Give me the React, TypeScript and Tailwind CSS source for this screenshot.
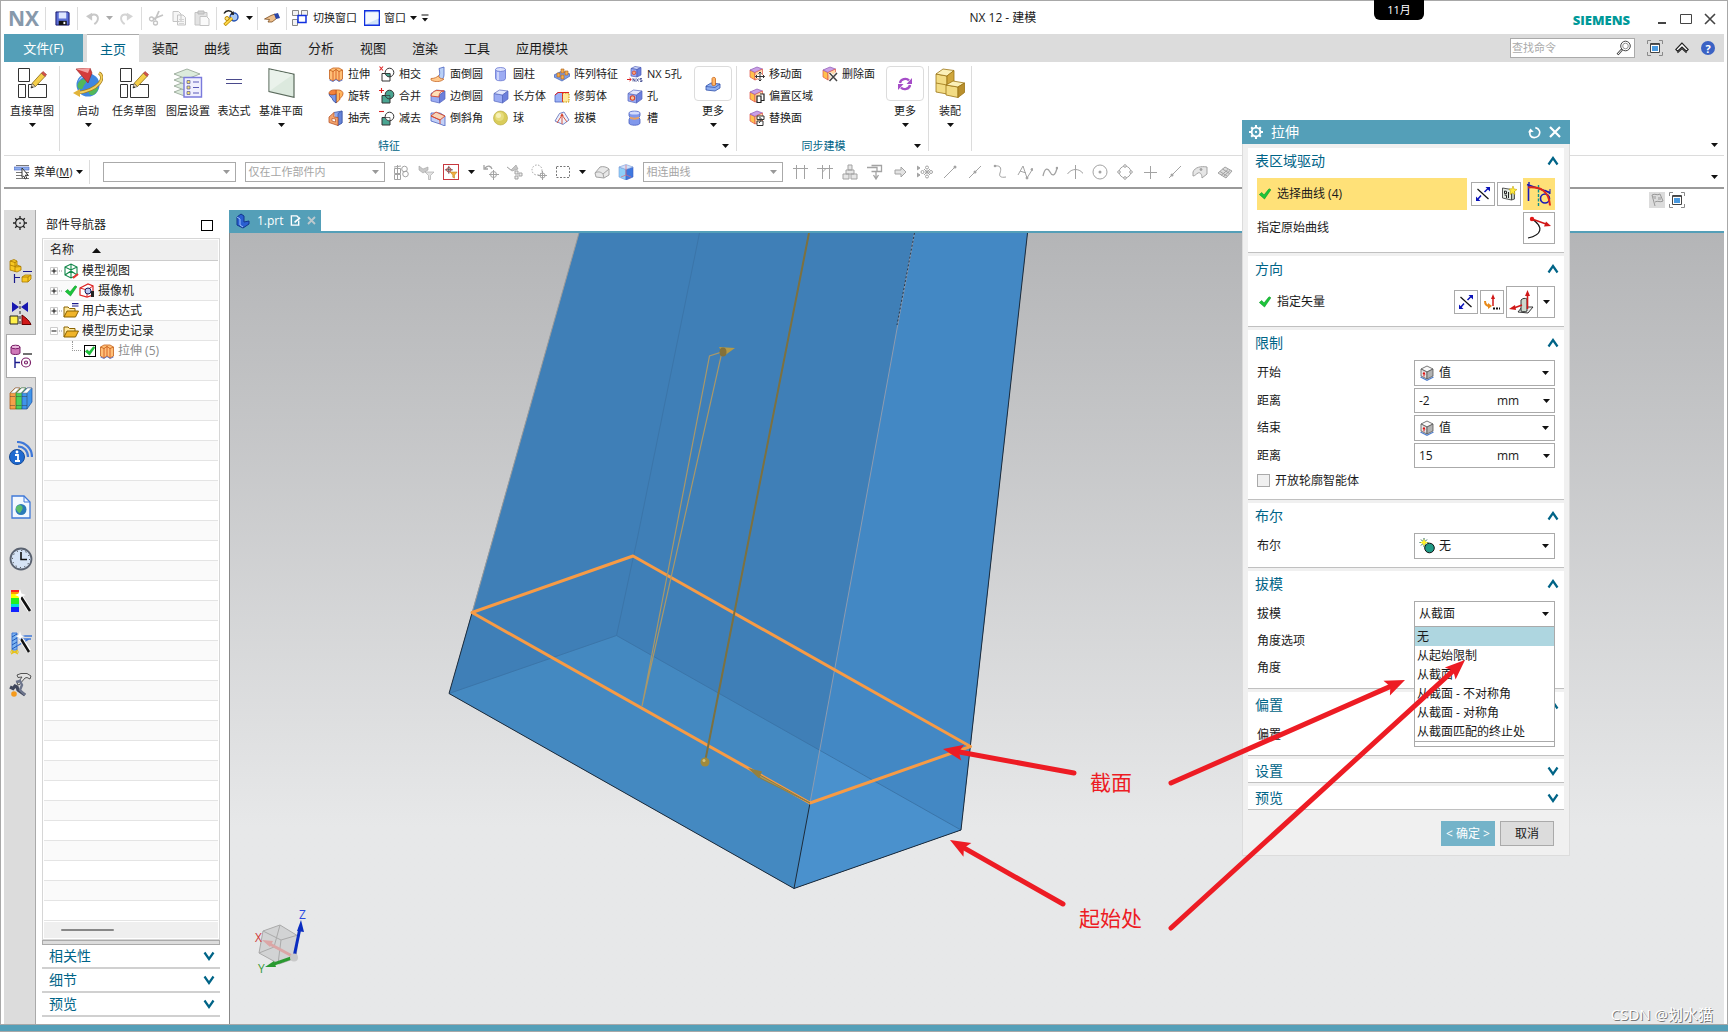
import type { ReactNode } from "react";

type Children = { children: ReactNode };

/* ---------- icon helpers ---------- */

function Ic({ s = 16, box = 16, children }: Children & { s?: number; box?: number }) {
  return (
    <svg width={s} height={s} viewBox={`0 0 ${box} ${box}`} fill="none" className="shrink-0" aria-hidden="true">
      {children}
    </svg>
  );
}

function Caret({ color = "#111" }: { color?: string }) {
  return (
    <svg width="7" height="4" viewBox="0 0 7 4" className="shrink-0" aria-hidden="true">
      <path d="M0 0h7L3.500 4z" fill={color} />
    </svg>
  );
}

function Chevron({ up = false }: { up?: boolean }) {
  return (
    <svg width="12" height="10" viewBox="0 0 12 10" className="shrink-0" aria-hidden="true">
      <path d={up ? "M1.500 8.500L6 2l4.500 6.500" : "M1.500 1.500L6 8l4.500-6.500"} fill="none" stroke="#006487" strokeWidth="2.200" />
    </svg>
  );
}

function Cube({ front = "#9aabf3", top = "#e2e7fd", side = "#6d80dc", line = "#5565bd" }) {
  return (
    <g stroke={line} strokeWidth=".7" strokeLinejoin="round">
      <path d="M1 5.500l8.500 1.500v8L1 13z" fill={front} />
      <path d="M1 5.500L6.500 2l8.500 1-5.500 4z" fill={top} />
      <path d="M9.500 7L15 3v8l-5.500 4z" fill={side} />
    </g>
  );
}

function SyncCube() {
  return (
    <g strokeLinejoin="round" strokeWidth=".7">
      <path d="M1 4l5 2.500V14l-5-3z" fill="#ffc14d" stroke="#e0554a" />
      <path d="M1 4l7-3 5.500 2L6 6.500z" fill="#c9a0e6" stroke="#8d58b5" />
      <path d="M6 6.500L13.500 3v8L6 14z" fill="#ffd9a8" stroke="#e0554a" />
    </g>
  );
}

function Pencil() {
  return (
    <g>
      <path d="M15 15.500L24.500 5l3.500 3.500L18.500 18.500z" fill="#f5cf4a" stroke="#8a6a14" strokeWidth=".8" />
      <path d="M24.500 5L26 3.500l3.500 3L28 8.500z" fill="#d9534a" stroke="#8f342d" strokeWidth=".6" />
      <path d="M15 15.500l3.500 3-4.500 1.500z" fill="#eed9ae" stroke="#555" strokeWidth=".6" />
      <path d="M14.800 17.800l-1 2.400 2.500-.8z" fill="#222" />
    </g>
  );
}

function SketchIcon() {
  return (
    <Ic s={30} box={30}>
      <g stroke="#333" strokeWidth="1">
        <path d="M1.500 .5h11v13h-11zM1.500 16.500h7v13h-7zM11.500 16.500h18v13h-18z" fill="#fff" />
      </g>
      <Pencil />
    </Ic>
  );
}

function CheckMark({ s = 12 }: { s?: number }) {
  return (
    <Ic s={s} box={12}>
      <path d="M.3 6.500L2.800 4.500l2.200 2.500L10 .8l1.900.9L5.500 11z" fill="#1cc53a" stroke="#0a9a26" strokeWidth=".6" />
    </Ic>
  );
}

function Folder({ marked = false }: { marked?: boolean }) {
  return (
    <Ic>
      <path d="M1 14V4h4l1.500 1.500H12V8" fill="#ffe9a0" stroke="#8a6200" />
      <path d="M1 14L4 8h11.500L12.500 14z" fill="#f0b429" stroke="#8a6200" />
      {marked && <path d="M9 .7h6.500M9 3h6.500" stroke="#1c1c8c" strokeWidth="1.200" />}
    </Ic>
  );
}

function FlipIcon() {
  return (
    <Ic>
      <path d="M2.500 3l11 10" stroke="#111" strokeWidth="1.200" />
      <path d="M9.500 6L13 2.500M6 9.500L3 13" stroke="#0a12b8" strokeWidth="1.500" />
      <path d="M15 1v4.500L10.500 1zM1 15v-4.500l4.500 4.500z" fill="#0a12b8" />
    </Ic>
  );
}

function ValueCube() {
  return (
    <Ic>
      <path d="M1.500 12l6.500 3.300 6.500-3.300" stroke="#4f7fd0" strokeWidth="1.200" />
      <g stroke="#555" strokeWidth=".8" strokeLinejoin="round">
        <path d="M2 4l6-3 6 3-6 3z" fill="#f8f8f8" />
        <path d="M2 4l6 3v7l-6-3z" fill="#e6e6e6" />
        <path d="M14 4L8 7v7l6-3z" fill="#b2b2b2" />
      </g>
      <path d="M5 11.500V8" stroke="#d11" strokeWidth="1" />
      <path d="M3.500 9L5 6.500 6.500 9.500z" fill="#d11" />
    </Ic>
  );
}

function Extrude() {
  return (
    <Ic>
      <path d="M1.500 4L5 2h6l3.500 2v9L11 15 8 13l-3 2-3.500-2z" fill="#ffc078" stroke="#c4601a" strokeWidth=".8" />
      <path d="M5 5v10M11 5v10M8 3v10" stroke="#d9662a" />
      <path d="M1.500 4L5 5.500 8 3.500l3 2L14.500 4" stroke="#c4601a" strokeWidth=".8" />
      <path d="M1.500 14l3.500 1.500 3-2 3 2 3.500-1.500" stroke="#4a63c0" strokeWidth=".8" />
    </Ic>
  );
}

function FullScreenIcon() {
  return (
    <Ic>
      <path d="M.5 4V.500H4M12 .500h3.500V4M15.500 12v3.500H12M4 15.500H.500V12" stroke="#8a8a8a" />
      <path d="M3.500 3.500h9v9h-9z" fill="#fff" stroke="#444" />
      <path d="M4 4h8v1H4z" fill="#555" />
      <path d="M5 6h6v5H5z" fill="#4a9ae0" />
    </Ic>
  );
}

/* ---------- title bar ---------- */

function Sep() {
  return <span className="h-[23px] w-px shrink-0 bg-[#dcdcdc]" />;
}

function TitleBar() {
  return (
    <header className="flex h-[33px] items-center bg-white pt-px text-[11px] leading-4">
      <span className="w-[41px] pl-1 text-[21px] leading-6 font-bold text-[#8799ab]">NX</span>
      <Sep />
      <button aria-label="保存" className="flex w-[31px] justify-center pl-[2px]">
        <Ic s={15}>
          <path d="M1 1h13l1 1v13H1z" fill="#5c6fd6" stroke="#111166" />
          <path d="M4 1.500h8V8H4z" fill="#dfe6ff" />
          <path d="M4 10.500h8.500V15H4z" fill="#111" />
          <path d="M9 11.500h2V14H9z" fill="#fff" />
        </Ic>
      </button>
      <Sep />
      <div className="flex w-[63px] items-center justify-between pr-2 pl-2">
        <button aria-label="撤销">
          <Ic s={14}>
            <path d="M4 7.500C6 3 12 3 13.500 7c.6 3-1 6-4 8" stroke="#c8c8c8" strokeWidth="2.200" />
            <path d="M0 6l7-4v9z" fill="#c8c8c8" />
          </Ic>
        </button>
        <Caret color="#aaa" />
        <button aria-label="重做">
          <Ic s={14}>
            <path d="M12 7.500C10 3 4 3 2.500 7c-.6 3 1 6 4 8" stroke="#d4d4d4" strokeWidth="2.200" />
            <path d="M16 6L9 2v9z" fill="#d4d4d4" />
          </Ic>
        </button>
      </div>
      <Sep />
      <div className="flex w-[74px] items-center justify-between pr-[6px] pl-[6px]">
        <button aria-label="剪切">
          <Ic>
            <path d="M11 1L7 10M15 5L5 9" stroke="#c4c4c4" strokeWidth="1.800" />
            <circle cx="3.500" cy="9" r="2" stroke="#c4c4c4" strokeWidth="1.300" />
            <circle cx="7.500" cy="13" r="2" stroke="#c4c4c4" strokeWidth="1.300" />
          </Ic>
        </button>
        <button aria-label="复制">
          <Ic>
            <path d="M2 1.500h5.500L10 4v7.500H2zM6.500 5h5.500l2.500 2.500V15h-8z" fill="#f6f6f6" stroke="#c4c4c4" />
            <path d="M8 9.500h5M8 11.500h5M8 13.500h5" stroke="#d5d5d5" />
          </Ic>
        </button>
        <button aria-label="粘贴">
          <Ic>
            <path d="M1 2.500h12V15H1z" fill="#e3e3e3" stroke="#c4c4c4" />
            <path d="M4 1h6v3H4z" fill="#d3d3d3" stroke="#bbb" />
            <path d="M6 6.500h6.500L15 9v6.500H6z" fill="#fafafa" stroke="#c4c4c4" />
          </Ic>
        </button>
      </div>
      <Sep />
      <div className="flex w-10 items-center justify-between pr-1 pl-[6px]">
        <button aria-label="重复命令">
          <Ic>
            <circle cx="11" cy="7" r="4" fill="#a9c8f5" stroke="#234fb0" strokeWidth="1.400" />
            <path d="M1 3.500C3 0 8 0 9.500 3" stroke="#222" strokeWidth="1.500" />
            <path d="M7 4.500l4 .5-.5-4z" fill="#222" />
            <path d="M1.500 15L9 8" stroke="#b98a00" strokeWidth="3.400" />
            <path d="M2 14.500L9 8" stroke="#ffd84a" strokeWidth="1.800" />
            <circle cx="4" cy="8.500" r="2" fill="#ffe27a" stroke="#b98a00" />
          </Ic>
        </button>
        <Caret />
      </div>
      <Sep />
      <button aria-label="触控" className="flex w-7 justify-center">
        <Ic>
          <path d="M.5 9l6.500-3.500 4-1.500 1.500 4.500L8 12H4L5.500 9.500z" fill="#eebf8c" stroke="#7a4c20" strokeWidth=".8" />
          <path d="M10 4l4-1 2 5-4 1z" fill="#2a46a8" />
        </Ic>
      </button>
      <Sep />
      <button className="flex items-center gap-[5px] pl-[5px]">
        <Ic>
          <path d="M.5.500h6v5h-6zM9.500.500h6v5h-6zM.5 9.500h5v6h-5z" fill="#f2f2f2" stroke="#888" />
          <path d="M6 5.500h8v7H6z" fill="#fff" stroke="#1030e0" strokeWidth="1.500" />
        </Ic>
        切换窗口
      </button>
      <button className="flex items-center gap-1 pl-[7px]">
        <Ic>
          <path d="M.7.700h14.600v14.600H.7z" fill="#cfe2f8" stroke="#1030e0" strokeWidth="1.400" />
          <path d="M1.500 2.500h13v6l-13 6z" fill="#f4f8fd" />
        </Ic>
        窗口
        <Caret />
      </button>
      <button aria-label="更多工具" className="pl-1">
        <Ic s={8} box={8}>
          <path d="M.5 1h7" stroke="#111" />
          <path d="M1 4h6L4 7.500z" fill="#111" />
        </Ic>
      </button>
      <h1 className="flex-1 pl-1 text-center text-xs">NX 12 - 建模</h1>
      <span className="pt-1 text-[13px] font-extrabold text-[#009999]">SIEMENS</span>
      <div className="flex items-center gap-3 pt-[2px] pr-2 pl-[26px]">
        <button aria-label="最小化">
          <Ic s={12} box={12}>
            <path d="M2 10h8" stroke="#444" strokeWidth="2" />
          </Ic>
        </button>
        <button aria-label="最大化">
          <Ic s={12} box={12}>
            <path d="M.5 1.500h11v9H.5z" stroke="#444" />
          </Ic>
        </button>
        <button aria-label="关闭">
          <Ic s={12} box={12}>
            <path d="M1 1l10 10M11 1L1 11" stroke="#444" strokeWidth="1.600" />
          </Ic>
        </button>
      </div>
    </header>
  );
}

const tabs = ["装配", "曲线", "曲面", "分析", "视图", "渲染", "工具"];

function TabBar() {
  return (
    <nav className="flex h-7 items-stretch bg-[#dcdcdc] text-[13px] leading-[26px]">
      <button className="w-[79px] bg-[#549fb8] text-white">文件(F)</button>
      <button className="ml-[4px] w-[52px] border-t border-[#aaa] bg-white leading-6 text-[#006487]">主页</button>
      {tabs.map((t) => (
        <button key={t} className="w-[52px]">
          {t}
        </button>
      ))}
      <button className="w-[78px]">应用模块</button>
      <div className="ml-auto flex items-center gap-3 pr-[9px]">
        <label className="flex h-5 w-[125px] items-center border border-[#aaa] bg-white pr-[2px] pl-px">
          <input aria-label="查找命令" placeholder="查找命令" className="w-full min-w-0 flex-1 bg-transparent text-[11px] leading-4 outline-none placeholder:text-[#aaa]" />
          <Ic>
            <circle cx="9.500" cy="6" r="4.800" stroke="#444" />
            <circle cx="9.500" cy="6" r="2.800" stroke="#777" strokeWidth=".8" />
            <path d="M6 9.500l-4.500 5" stroke="#444" strokeWidth="2.600" />
            <path d="M5.500 10l-3.500 4" stroke="#fff" />
          </Ic>
        </label>
        <button aria-label="全屏">
          <FullScreenIcon />
        </button>
        <button aria-label="折叠功能区">
          <Ic s={14} box={14}>
            <path d="M7 2L.8 8.500l1.700 1.700L7 6l4.500 4.200 1.700-1.700z" fill="#fff" stroke="#222" strokeWidth="1.100" />
            <path d="M2.500 11.800L7 7.500l4.500 4.300" stroke="#222" strokeWidth="1.100" />
          </Ic>
        </button>
        <button aria-label="帮助" className="flex size-[14px] items-center justify-center rounded-full bg-[#3b62c4] text-[11px] leading-none font-bold text-white">
          ?
        </button>
      </div>
    </nav>
  );
}

/* ---------- ribbon ---------- */

function BigButton({ label, icon, width, caret = false, boxed = false }: { label: string; icon: ReactNode; width: string; caret?: boolean; boxed?: boolean }) {
  return (
    <button className={`flex shrink-0 flex-col items-center ${width} ${boxed ? "pt-1" : "pt-[6px]"}`}>
      {boxed ? <span className="flex h-[35px] w-[38px] items-center justify-center rounded-sm border border-[#dcdcdc]">{icon}</span> : icon}
      <span className={`leading-4 whitespace-nowrap ${boxed ? "mt-[2px]" : "mt-[5px]"}`}>{label}</span>
      {caret && (
        <span className="mt-1">
          <Caret />
        </span>
      )}
    </button>
  );
}

function SmallButton({ label, icon }: { label: string; icon: ReactNode }) {
  return (
    <button className="flex h-[22px] items-center gap-1 whitespace-nowrap">
      {icon}
      {label}
    </button>
  );
}

function BoolIcon({ fill, front, sign }: { fill: string; front: string; sign: string }) {
  return (
    <Ic>
      <path d="M3 7.500h8V15H3z" fill={fill} stroke="#333" />
      <circle cx="10.500" cy="6.500" r="4.300" fill={front} stroke="#333" />
      <path d="M6.500 7.500H11v3.200C8.500 11 6.500 9.500 6.500 7.500z" fill={sign === "-" ? "#fff" : "#4aa592"} stroke="#333" strokeWidth=".7" />
      {sign === "x" && <path d="M.5.5l3.500 4M4 .5l-3.500 4" stroke="#d22" strokeWidth="1.100" />}
      {sign === "+" && <path d="M2.500 0v5M0 2.500h5" stroke="#d22" strokeWidth="1.100" />}
      {sign === "-" && <path d="M0 1.500h5" stroke="#d22" strokeWidth="1.100" />}
    </Ic>
  );
}

const featureColumns: { width: string; items: { label: string; icon: ReactNode }[] }[] = [
  {
    width: "w-[51px]",
    items: [
      { label: "拉伸", icon: <Extrude /> },
      {
        label: "旋转",
        icon: (
          <Ic>
            <path d="M8 2c4-.5 7 1 7 3.500 0 3.500-3 3.500-3.500 6.500L8 15z" fill="#ffb45e" stroke="#c25616" strokeWidth=".8" />
            <path d="M8 6v9l-3-2.500C4.500 9 1 9 1 5.500 2 7 5 7 8 6z" fill="#7e98e6" stroke="#2c479e" strokeWidth=".8" />
            <path d="M1 5.500C1 3 4 1.500 8 2v4C5 7 2 7 1 5.500z" fill="#f5823c" stroke="#c25616" strokeWidth=".8" />
            <path d="M11.500 5v7" stroke="#d9662a" strokeWidth=".8" />
          </Ic>
        ),
      },
      {
        label: "抽壳",
        icon: (
          <Ic>
            <path d="M6 2.500l8-1.500v12l-5 2.500" fill="#8fa9ea" stroke="#3c57a8" strokeWidth=".8" />
            <path d="M10 3.500l4-2.500v12l-4 2.500z" fill="#6583d8" stroke="#3c57a8" strokeWidth=".7" />
            <path d="M1 7l5-4.500V7l4 .5v8L1 12.500z" fill="#f3a36c" stroke="#b85428" strokeWidth=".8" />
            <path d="M4 8.500l3.500.5v3L4 11z" fill="#fff" stroke="#b85428" strokeWidth=".7" />
          </Ic>
        ),
      },
    ],
  },
  {
    width: "w-[51px]",
    items: [
      { label: "相交", icon: <BoolIcon fill="#fff" front="none" sign="x" /> },
      { label: "合并", icon: <BoolIcon fill="#4aa592" front="#4aa592" sign="+" /> },
      { label: "减去", icon: <BoolIcon fill="#4aa592" front="#fff" sign="-" /> },
    ],
  },
  {
    width: "w-[63px]",
    items: [
      {
        label: "面倒圆",
        icon: (
          <Ic>
            <path d="M9 2.500L14 1v8c0 3-2 5-5 5-2-.5-2-2-.5-3C10 9 10 6 9 2.500z" fill="#b9d0f6" stroke="#4a63c0" strokeWidth=".8" />
            <path d="M1 12.500c3 0 6-1 7.500-3 0 2 2 3.500 5.500 3.500-3 3-9 3.500-13 1z" fill="#ffc98c" stroke="#c86a2a" strokeWidth=".8" />
          </Ic>
        ),
      },
      {
        label: "边倒圆",
        icon: (
          <Ic>
            <Cube />
            <path d="M1 8c0-3 4-5.500 6-5.500l7 .5c-3 0-5 2-5 6z" fill="#ffe1b8" stroke="#d6452c" strokeWidth=".9" />
          </Ic>
        ),
      },
      {
        label: "倒斜角",
        icon: (
          <Ic>
            <path d="M1 3h9l5 3v10l-5-2-9-3z" fill="#c3d0f7" stroke="#4a63c0" strokeWidth=".8" />
            <path d="M1 6l5-4 9 4-5 4z" fill="#f7d4b8" stroke="#d6452c" strokeWidth=".9" />
            <path d="M1 6l9 4v4" stroke="#d6452c" strokeWidth=".9" />
          </Ic>
        ),
      },
    ],
  },
  {
    width: "w-[61px]",
    items: [
      {
        label: "圆柱",
        icon: (
          <Ic>
            <path d="M2.500 3.500v9c0 3 10 3 10 0v-9" fill="#9dacf3" stroke="#6675d0" strokeWidth=".8" />
            <ellipse cx="7.500" cy="3.500" rx="5" ry="2" fill="#dbe1fc" stroke="#6675d0" strokeWidth=".8" />
            <path d="M5 6v8" stroke="#cdd5fb" strokeWidth="2" />
          </Ic>
        ),
      },
      {
        label: "长方体",
        icon: (
          <Ic>
            <Cube />
          </Ic>
        ),
      },
      {
        label: "球",
        icon: (
          <Ic>
            <circle cx="7.500" cy="8" r="7" fill="#d9cc5a" stroke="#b5a83c" strokeWidth=".6" />
            <circle cx="6.500" cy="6.500" r="4.500" fill="#e6dc7c" />
            <circle cx="5.500" cy="5.500" r="2.500" fill="#f6f0b4" />
          </Ic>
        ),
      },
    ],
  },
  {
    width: "w-[73px]",
    items: [
      {
        label: "阵列特征",
        icon: (
          <Ic>
            <path d="M0 9l8-4 8 3v2l-8 5-8-4z" fill="#7fa0e8" stroke="#2f4fa8" strokeWidth=".6" />
            <path d="M3 7h3v4H3zM7 9h3v4H7zM7 3h3v4H7zM11 5h3v4h-3z" fill="#f5ae50" stroke="#a8601a" strokeWidth=".6" />
          </Ic>
        ),
      },
      {
        label: "修剪体",
        icon: (
          <Ic>
            <path d="M1 7l3-2.500h5V14H1z" fill="#9db2f5" stroke="#4a63c0" strokeWidth=".8" />
            <path d="M8.500 5H15v9H8.500z" fill="#ffe99c" stroke="#c99400" strokeDasharray="1.500 1" />
            <path d="M1 7l3-2.500h11" stroke="#d22" />
            <path d="M8.500 5v9" stroke="#d22" strokeWidth=".8" />
          </Ic>
        ),
      },
      {
        label: "拔模",
        icon: (
          <Ic>
            <path d="M5.500 3.500L10 2l5 8-6 4.500L1 11z" fill="#eef1fb" stroke="#5a6ab8" strokeWidth=".8" />
            <path d="M8 14V5M8 5L3 13M8 5l5 7" stroke="#d6452c" strokeWidth=".9" />
            <path d="M6.300 6L8 3l1.700 3z" fill="#d6452c" />
          </Ic>
        ),
      },
    ],
  },
  {
    width: "w-[67px]",
    items: [
      {
        label: "NX 5孔",
        icon: (
          <Ic>
            <path d="M4 2.500l4-2 6 1-4 2z" fill="#d5dcfb" stroke="#4a5cb8" strokeWidth=".7" />
            <path d="M4 2.500l6 1V11l-6-1z" fill="#9aabf3" stroke="#4a5cb8" strokeWidth=".7" />
            <path d="M10 3.500l4-2V9l-4 2z" fill="#6d80dc" stroke="#4a5cb8" strokeWidth=".7" />
            <circle cx="7" cy="6.800" r="1.800" fill="#f4a07a" stroke="#d6452c" strokeWidth=".8" />
            <path d="M0 13.500h4M2.500 12l1.800 1.500L2.500 15" stroke="#d22" />
            <path d="M6 15.500v-3l2 3v-3M9.500 12.500l2 3M11.500 12.500l-2 3M13 15.500h2v-1.500h-2v-1.500h2" stroke="#1c2a7c" strokeWidth=".7" />
          </Ic>
        ),
      },
      {
        label: "孔",
        icon: (
          <Ic>
            <Cube />
            <circle cx="5.500" cy="10" r="2.200" fill="#f7c49b" stroke="#d6452c" strokeWidth="1.100" />
          </Ic>
        ),
      },
      {
        label: "槽",
        icon: (
          <Ic>
            <path d="M2 3c0-2.500 11-2.500 11 0v2.500l-1 2 1 2V13c0 3-11 3-11 0V9.500l1-2-1-2z" fill="#8198ec" stroke="#4a5fc0" strokeWidth=".8" />
            <path d="M3 6.500c2 1.500 7 1.500 9 0v2c-2 1.500-7 1.500-9 0z" fill="#e8a060" />
            <ellipse cx="7.500" cy="3" rx="5" ry="1.600" fill="#d3dbfc" />
          </Ic>
        ),
      },
    ],
  },
];

function GroupFooter({ label }: { label: string }) {
  return (
    <div className="flex h-[18px] items-center">
      <span className="flex-1 text-center leading-4 text-[#006487]">{label}</span>
      <span className="w-[18px] pl-1">
        <Caret />
      </span>
    </div>
  );
}

function RibbonGroup({ width, label, children }: Children & { width: string; label?: string }) {
  return (
    <section className={`flex flex-col ${width}`}>
      <div className="flex h-[75px]">{children}</div>
      {label && <GroupFooter label={label} />}
    </section>
  );
}

function GroupSep() {
  return <span className="my-1 w-px bg-[#dcdcdc]" />;
}

function Ribbon() {
  return (
    <div className="flex h-[94px] border-b border-[#dcdcdc] bg-white text-[11px]">
      <RibbonGroup width="w-[55px]">
        <BigButton label="直接草图" icon={<SketchIcon />} width="w-14" caret />
      </RibbonGroup>
      <GroupSep />
      <RibbonGroup width="w-[676px]" label="特征">
        <div className="flex pr-[19px] pl-[9px]">
          <BigButton
            label="启动"
            width="w-[38px]"
            caret
            icon={
              <Ic s={30} box={30}>
                <circle cx="15" cy="17" r="11.500" fill="#3f87e0" />
                <path d="M5 14c2-6 8-9 14-7-6 0-11 3-14 7z" fill="#a9d0fa" />
                <path d="M8 12c5-2 7 1 4 4s-1 6-5 5-3-6 1-9zM17 20c4-2 8-1 8 1s-4 7-7 6-3-5-1-7z" fill="#52b85a" />
                <path d="M26 5c7 4 1 17-22 20" stroke="#a87d18" strokeWidth="3.200" />
                <path d="M26 5c7 4 1 17-22 20" stroke="#f2d060" strokeWidth="1.800" />
                <path d="M0 25l7-4v8z" fill="#e2b43a" />
                <path d="M3 1l14-1 2 5-4 10z" fill="#d43c3c" stroke="#8f2222" strokeWidth=".6" />
                <path d="M3 1l14-1-2 5z" fill="#f3a0a0" />
              </Ic>
            }
          />
          <BigButton label="任务草图" icon={<SketchIcon />} width="w-[54px]" />
          <BigButton
            label="图层设置"
            width="w-[54px]"
            icon={
              <Ic s={30} box={30}>
                <g stroke="#8fa08f" strokeWidth=".8" fill="#dcebdc">
                  <path d="M1 24l13-5 13 5-13 5z" />
                  <path d="M1 18l13-5 13 5-13 5z" />
                  <path d="M1 12l13-5 13 5-13 5z" />
                  <path d="M1 6l13-5 13 5-13 5z" />
                </g>
                <path d="M11 9.500h17.500V29H11z" fill="#f0effe" stroke="#7a7adc" strokeWidth="1.400" />
                <g fill="#f3e06a" stroke="#55559a" strokeWidth=".7">
                  <path d="M14 12.500h3v3h-3zM14 18h3v3h-3zM14 23.500h3v3h-3z" />
                </g>
                <path d="M20 14h6M20 19.500h6M20 25h6" stroke="#5a5ab8" strokeWidth="1.200" />
              </Ic>
            }
          />
          <BigButton
            label="表达式"
            width="w-[38px]"
            icon={
              <Ic s={30} box={30}>
                <path d="M7 11.500h16M7 15.500h16" stroke="#4a4a8c" />
              </Ic>
            }
          />
          <BigButton
            label="基准平面"
            width="w-14"
            caret
            icon={
              <Ic s={30} box={30}>
                <path d="M3 .8l25 5.500v23L3 23.500z" fill="#dce9de" stroke="#5a6a5c" strokeWidth="1.200" />
                <path d="M3.600 23L27 6.500 3.600 1.500z" fill="#eaf2eb" />
              </Ic>
            }
          />
        </div>
        {featureColumns.map((col) => (
          <div key={col.items[0].label} className={`pt-px ${col.width}`}>
            {col.items.map((it) => (
              <SmallButton key={it.label} label={it.label} icon={it.icon} />
            ))}
          </div>
        ))}
        <BigButton
          label="更多"
          width="w-[38px]"
          caret
          boxed
          icon={
            <Ic>
              <path d="M1 10l5-3 9 1v4l-5 3-9-1z" fill="#8fb0f2" stroke="#2f4fa8" strokeWidth=".8" />
              <path d="M1 10.500l9 1 5-3.500" stroke="#2f4fa8" strokeWidth=".7" />
              <path d="M7 2.500c0-1.500 3.500-1.500 3.500 0V9c-1 .8-2.500.8-3.500 0z" fill="#ffb668" stroke="#c86416" strokeWidth=".8" />
            </Ic>
          }
        />
      </RibbonGroup>
      <GroupSep />
      <RibbonGroup width="w-[191px]" label="同步建模">
        <div className="w-[85px] pt-px pl-3">
          <SmallButton
            label="移动面"
            icon={
              <Ic>
                <SyncCube />
                <path d="M11 6v9M6.500 10.500h9" stroke="#fff" strokeWidth="3" />
                <path d="M11 6v9M6.500 10.500h9M9.500 7.500L11 6l1.500 1.500M9.500 13.500L11 15l1.500-1.500M8 9l-1.500 1.500L8 12M14 9l1.500 1.500L14 12" stroke="#333" />
              </Ic>
            }
          />
          <SmallButton
            label="偏置区域"
            icon={
              <Ic>
                <SyncCube />
                <path d="M8 8h4v6.500H8zM11 6h4v6.500h-3" fill="#fff" stroke="#222" strokeWidth="1.200" />
              </Ic>
            }
          />
          <SmallButton
            label="替换面"
            icon={
              <Ic>
                <SyncCube />
                <path d="M8 6h7v3.500H8zM8 11h6v4.500H8z" fill="#fff" stroke="#333" />
                <path d="M10 8c3-1 3 2 0 5" stroke="#333" />
              </Ic>
            }
          />
        </div>
        <div className="w-16 pt-px">
          <SmallButton
            label="删除面"
            icon={
              <Ic>
                <SyncCube />
                <path d="M7.500 7l7.500 8M15 7l-7.500 8" stroke="#fff" strokeWidth="3.200" />
                <path d="M7.500 7l7.500 8M15 7l-7.500 8" stroke="#444" strokeWidth="1.500" />
              </Ic>
            }
          />
        </div>
        <BigButton
          label="更多"
          width="w-[38px]"
          caret
          boxed
          icon={
            <Ic>
              <path d="M3 7C3.500 3 9.500 1.500 12 4.500M13 9c-.5 4-6.500 5.500-9 2.500" stroke="#a64dc8" strokeWidth="2.400" />
              <path d="M15 2v6H9.500zM1 14V8h5.500z" fill="#a64dc8" />
            </Ic>
          }
        />
      </RibbonGroup>
      <GroupSep />
      <RibbonGroup width="w-[42px]">
        <BigButton
          label="装配"
          width="w-[42px]"
          caret
          icon={
            <Ic s={30} box={30}>
              <g stroke="#9a7414" strokeWidth=".8" strokeLinejoin="round">
                <path d="M1 6l11 2v18L1 24z" fill="#f3dc84" />
                <path d="M1 6l7-5 11 1.500L12 8z" fill="#fbf0b8" />
                <path d="M12 8l7-5.500V15l-7 3z" fill="#cfa63c" />
                <path d="M1 15l11 2" />
                <path d="M11 17l12 2v10.500L11 27z" fill="#f3dc84" />
                <path d="M11 17l7-4 11.500 2-6.500 4z" fill="#fbf0b8" />
                <path d="M23 19l6.500-4v9.500l-6.500 5z" fill="#b98f2c" />
              </g>
            </Ic>
          }
        />
      </RibbonGroup>
      <GroupSep />
      <div className="mr-[6px] mb-2 ml-auto self-end">
        <Caret />
      </div>
    </div>
  );
}

/* ---------- selection toolbar ---------- */

function FilterSelect({ value, label, width }: { value: string; label: string; width: string }) {
  return (
    <div className={`relative ml-[9px] flex h-5 items-center border border-[#aaa] ${width}`}>
      <select aria-label={label} className="h-full w-full appearance-none bg-white px-[2px] text-[11px] leading-4 text-[#a5a5a5]">
        <option>{value}</option>
      </select>
      <span className="pointer-events-none absolute right-[5px]">
        <Caret color="#999" />
      </span>
    </div>
  );
}

const g = "#a3a3a3";

const snapIcons: ReactNode[] = [
  <path d="M4.500 1v14M12.500 1v14M1 4.500h15" stroke={g} />,
  <path d="M5.500 1v14M12.500 1v14M0 4.500h16M5.500 8L9 4.500" stroke={g} />,
  <path d="M6 1h4v5H6zM4 6h8v4H4zM1 10h6v5H1zM9 10h6v5H9z" fill="#e6e6e6" stroke={g} />,
  <path d="M4.500 1.500h10v6H9M0 3.500h10v4H4.500M9 7v7M6.500 11L9 15l2.500-4" stroke={g} strokeWidth="1.300" />,
  <path d="M3 6h6V3l5 5-5 5v-3H3z" fill="#e3e3e3" stroke={g} />,
  <g stroke={g}>
    <path d="M0 2l3 2-3 2M0 9l3 2-3 2" fill={g} />
    <circle cx="10" cy="3.500" r="1.500" /><circle cx="5.500" cy="8" r="1.500" /><circle cx="14" cy="8" r="1.500" />
    <circle cx="10" cy="12.500" r="1.500" /><path d="M8 8h4M10 6v4M7 5l6 6M13 5l-6 6" />
  </g>,
  <g><path d="M2 14L13 3" stroke={g} /><circle cx="13" cy="3" r="1.500" fill={g} /></g>,
  <g><path d="M2 14L14 2" stroke={g} /><circle cx="8" cy="8" r="1.500" fill={g} /></g>,
  <g><path d="M3 2c7-1 6 4 5 7s0 5 6 4" stroke={g} /><circle cx="3" cy="2" r="1.300" fill={g} /></g>,
  <g stroke={g}><path d="M1 11L6 2l4 12 5-8" /><path d="M3 7l6 2" /><circle cx="15" cy="5.500" r="1" fill={g} /><circle cx="10" cy="14" r="1" fill={g} /></g>,
  <g><path d="M1 12C3 3 6 4 8 8s5 5 7-4" stroke={g} strokeWidth="1.300" /><circle cx="15" cy="4" r="1.300" fill={g} /></g>,
  <path d="M8.500 1v14M.5 10c4-6 12-6 16 0" stroke={g} />,
  <g><circle cx="8" cy="8" r="7" stroke={g} /><circle cx="8" cy="8" r="1.500" fill={g} /></g>,
  <g stroke={g}>
    <circle cx="8" cy="8" r="5.800" />
    <circle cx="8" cy="2" r="1.300" fill="#fff" /><circle cx="8" cy="14" r="1.300" fill="#fff" />
    <circle cx="2" cy="8" r="1.300" fill="#fff" /><circle cx="14" cy="8" r="1.300" fill="#fff" />
  </g>,
  <path d="M8.500 2v13M2 8.500h13" stroke={g} />,
  <g><path d="M2 14L14 2" stroke={g} /><circle cx="5" cy="11" r="1.500" fill={g} /></g>,
  <g stroke={g}><path d="M1 12V8c2-5 8-6 14-5v7l-5 4c0-4-2-6-4-5s-3 3-5 3z" fill="#e6e6e6" /><circle cx="9" cy="5.500" r="1" fill={g} /></g>,
  <g stroke={g}><path d="M1 9l7-6 7 4-6 7z" fill="#ddd" /><path d="M3 7.500l7 4.500M5.500 5l7 4.500M4 11.500l7-6M6 13l7-6.500" /></g>,
  <path d="M1 1h12v14H1zM4 4h6M4 8h6M4 12h6M7 1v14" stroke={g} />,
];

function Toolbar() {
  return (
    <div className="flex h-[33px] items-center border-b-2 border-[#999] text-[11px] leading-4">
      <button className="flex items-center gap-1 pl-[10px]">
        <Ic>
          <path d="M2 1.500h13M2 8.500h13M2 11.500h13M2 14.500h13" stroke="#777" />
          <path d="M0 3h15v3H0z" fill="#8fb0ee" stroke="#4a63c0" strokeWidth=".6" />
          <path d="M8 4l6 7-2.700.2 1.500 3-1.600.8-1.400-3L8 13.500z" fill="#fff" stroke="#222" strokeWidth=".9" />
        </Ic>
        <span>
          菜单(<u>M</u>)
        </span>
        <Caret />
      </button>
      <span className="ml-[6px] h-6 w-px bg-[#dcdcdc]" />
      <span className="w-1" />
      <FilterSelect value="" label="选择类型" width="w-[133px]" />
      <FilterSelect value="仅在工作部件内" label="选择范围" width="w-[140px]" />
      <div className="flex items-center gap-[9px] pl-2">
        <Ic>
          <path d="M1.500 4.500h6v5h-6zM1.500 10.500h6v5h-6zM4.500 1v14M1 3l7-1" stroke={g} />
          <circle cx="11.500" cy="5" r="2.800" stroke={g} /><circle cx="12.500" cy="10" r="2.800" stroke={g} />
        </Ic>
        <Ic>
          <path d="M1 2l4 3 5-2v3l-5 3-4-3z" fill="#c9c9c9" stroke={g} strokeWidth=".6" />
          <path d="M7 8h9l-3.500 3.500v4h-2v-4z" fill="#e3e3e3" stroke={g} strokeWidth=".6" />
        </Ic>
        <button aria-label="过滤器" className="border border-[#c8383f] bg-white">
          <Ic s={14}>
            <path d="M5.500 1v9M1 5.500h9" stroke="#444" />
            <circle cx="5.500" cy="5.500" r="2.500" stroke="#a03030" />
            <path d="M7 8h8l-3 3.500V15l-2-1v-2.500z" fill="#f0b040" stroke="#b87818" strokeWidth=".6" />
          </Ic>
        </button>
        <Caret />
      </div>
      <div className="flex items-center gap-2 pl-2">
        <Ic>
          <path d="M1 1v4h4M2 4c3-3 6-2 7 1" stroke={g} strokeWidth="1.300" />
          <circle cx="10.500" cy="10.500" r="3" stroke={g} /><path d="M10.500 6v10M6 10.500h10" stroke={g} />
        </Ic>
        <Ic>
          <path d="M0 3l4 3 5-5 2 4-6 2z" fill="#c5c5c5" stroke={g} strokeWidth=".7" />
          <path d="M8 7h3v3H8zM8 12h3v3H8zM12 9h3v3h-3z" fill="#eee" stroke={g} />
        </Ic>
        <Ic>
          <circle cx="6" cy="6" r="5" stroke={g} strokeDasharray="1.500 1.500" />
          <circle cx="11.500" cy="11.500" r="2.500" stroke={g} /><path d="M11.500 7v9M7 11.500h9" stroke={g} />
        </Ic>
        <Ic>
          <path d="M1.500 2.500h13v11h-13z" stroke="#777" strokeDasharray="2 1.500" />
        </Ic>
        <Caret />
      </div>
      <div className="flex items-center gap-2 pl-2">
        <Ic>
          <path d="M1 9l5-6c3-1 7 0 9 2v6l-5 3-8-1z" fill="#e8e8e8" stroke={g} />
          <path d="M1 9c3-2 6-1 8 1l6-5M9 10l1 4" stroke={g} />
        </Ic>
        <Ic>
          <path d="M1 3l7 2.500V16l-7-3z" fill="#8fd0f8" stroke="#7a9bd8" strokeWidth=".6" />
          <path d="M15 3L8 5.500V16l7-3z" fill="#3f78e0" stroke="#3c5fc0" strokeWidth=".6" />
          <path d="M1 3l7-2.500L15 3 8 5.500z" fill="#cfe0fa" stroke="#7a9bd8" strokeWidth=".6" />
          <path d="M8 1v10l5 2M8 11l-5 2" stroke="#e06a7a" strokeWidth=".7" />
        </Ic>
      </div>
      <FilterSelect value="相连曲线" label="曲线规则" width="w-[140px]" />
      <div className="flex min-w-0 flex-1 overflow-hidden pl-1">
        {snapIcons.map((icon, i) => (
          <span key={i} className="flex w-[25px] shrink-0 justify-center">
            <Ic>{icon}</Ic>
          </span>
        ))}
      </div>
      <span className="mt-[10px] pr-[6px]">
        <Caret />
      </span>
    </div>
  );
}

/* ---------- resource bar ---------- */

const rail: { name: string; cls: string; icon: ReactNode }[] = [
  {
    name: "装配导航器",
    cls: "mt-[14px] h-[42px]",
    icon: (
      <g>
        <path d="M1 2l4-1.500L8 2v4l4 1.500V11l-4 2-7-2z" fill="#f8c822" stroke="#a87800" strokeWidth=".8" />
        <path d="M1 6l5 1.500L8 6M6 3v10M1 2l5 1.500L8 2M6 8l6-.5" stroke="#a87800" strokeWidth=".8" />
        <path d="M14 12.500h9M5.500 15v9M5.500 18.500H11" stroke="#1a1a8c" strokeWidth="1.200" />
        <path d="M13 18l3-2h6v4l-3 3h-6zM13 18h6v5M19 18l3-2" fill="#f8c822" stroke="#a87800" strokeWidth=".8" />
      </g>
    ),
  },
  {
    name: "约束导航器",
    cls: "h-[42px]",
    icon: (
      <g>
        <path d="M3 1l7 5-7 5zM19 1l-7 5 7 5z" fill="#1818b0" />
        <path d="M11 0v24" stroke="#222" strokeDasharray="3 2" />
        <path d="M1 15h8v8H1z" fill="#fff04a" stroke="#222" />
        <path d="M13 14v9.500h9C20 19 17 17 13 14z" fill="#d01818" stroke="#600" />
      </g>
    ),
  },
  {
    name: "部件导航器",
    cls: "h-11 border-y border-l border-[#aaa] bg-white ml-[2px] -mr-px",
    icon: (
      <g>
        <path d="M1 3v6c0 2 9 2 9 0V3" fill="#cf78b8" stroke="#7a1f68" />
        <ellipse cx="5.500" cy="3" rx="4.500" ry="1.800" fill="#eab8dc" stroke="#7a1f68" />
        <path d="M13 10h9" stroke="#111" strokeWidth="1.200" />
        <path d="M5 13v11M5 18.500h5" stroke="#1a1a8c" strokeWidth="1.400" />
        <circle cx="16" cy="18.500" r="4.500" stroke="#7a1f68" strokeWidth="1.200" /><circle cx="16" cy="18.500" r="1.500" stroke="#7a1f68" strokeWidth="1.200" />
      </g>
    ),
  },
  {
    name: "重用库",
    cls: "h-[42px]",
    icon: (
      <g strokeWidth=".7">
        <path d="M1 6l5-5h5v5l-4 16H1z" fill="#f5a04a" stroke="#a8500a" />
        <path d="M7 6l5-5h5v5l-4 16H7z" fill="#4ed05a" stroke="#1a7a24" />
        <path d="M13 6l5-5h5v14l-5 7h-5z" fill="#3f94ea" stroke="#1a4fa0" />
        <path d="M1.500 6l5-5h4l-4.500 5zM7.500 6l5-5h4L12 6zM13.500 6l5-5h4L18 6z" fill="#fff" stroke="#777" strokeWidth=".5" />
        <path d="M1 9.500h5M1 18.500h5M7 9.500h5.500M7 18.500h5.500M13 9.500h5M18 6v16M13 18.500h5" stroke="#333" strokeOpacity=".6" />
      </g>
    ),
  },
  {
    name: "HD3D 工具",
    cls: "mt-3 h-[42px]",
    icon: (
      <g>
        <path d="M8 1c8 0 15 6 15 15M9 5.500c6 0 10 4.500 10 10.500" stroke="#3f78d8" strokeWidth="2.200" />
        <circle cx="8" cy="16" r="7.500" fill="#1f6ad0" stroke="#174a96" />
        <path d="M6 14h3v6M6 20h5" stroke="#fff" strokeWidth="1.800" /><circle cx="8" cy="11" r="1.400" fill="#fff" />
      </g>
    ),
  },
  {
    name: "Web 浏览器",
    cls: "mt-3 h-[42px]",
    icon: (
      <g>
        <path d="M3 1h12l6 6v16H3z" fill="#f2f8ff" stroke="#3f78d8" strokeWidth="1.300" />
        <path d="M15 1v6h6" stroke="#3f78d8" />
        <circle cx="12" cy="14.500" r="5.500" fill="#2a7ab8" /><path d="M8 11c4-3 7 1 5 4s-2 4-4 2-3-4-1-6z" fill="#5cbe6a" />
      </g>
    ),
  },
  {
    name: "历史记录",
    cls: "mt-[10px] h-[42px]",
    icon: (
      <g>
        <circle cx="12" cy="12" r="10.500" fill="#d6e4f6" stroke="#5a6270" strokeWidth="1.800" />
        <circle cx="12" cy="12" r="8.500" fill="none" stroke="#222" strokeWidth="1" strokeDasharray="1 3.450" />
        <path d="M12 5v7.500h6" stroke="#111" strokeWidth="1.600" />
      </g>
    ),
  },
  {
    name: "系统材料",
    cls: "h-[42px]",
    icon: (
      <g>
        <path d="M2 1h8v5H2z" fill="#f22" /><path d="M2 3h8v2H2z" fill="#f90" /><path d="M2 5h8v4H2z" fill="#ff0" /><path d="M2 9h8v6H2z" fill="#2e2" />
        <path d="M2 15h8v3H2z" fill="#0dd" /><path d="M2 18h8v5H2z" fill="#12f" />
        <path d="M12 8l9 14" stroke="#fff" strokeWidth="4.500" /><path d="M12 8l9 14" stroke="#111" strokeWidth="2.600" />
        <path d="M11 0l1.500 4.500L17 6l-4.500 1.500L11 12 9.500 7.500 6 6l3.500-1.500z" fill="#fff" />
      </g>
    ),
  },
  {
    name: "Process Studio",
    cls: "h-[42px]",
    icon: (
      <g>
        <path d="M3 2h5v17H3z" fill="#7db4f0" stroke="#3f78d8" />
        <path d="M3 6l5-3M3 10l5-3M3 14l5-3M3 18l5-3" stroke="#1f58b8" />
        <path d="M10 5h13M10 8h12M8 15L20 8" stroke="#3f78d8" strokeWidth="1.400" />
        <path d="M1 21h9M2 19l7 4M9 19l-7 4" stroke="#e6c21a" strokeWidth="1.200" />
        <path d="M12 8l8 12" stroke="#fff" strokeWidth="4.500" /><path d="M12 8l8 13" stroke="#111" strokeWidth="2.400" />
        <path d="M11 0l1 4 4 1-4 1.500-1 4-1-4L6 5l4-1z" fill="#fff" />
      </g>
    ),
  },
  {
    name: "加工向导",
    cls: "h-[42px]",
    icon: (
      <g>
        <path d="M8 2l4-1.500h6L22 3l-1 3-3-1.500-2 .5L10 12l-2-1 5-7-4 .500z" fill="#e2e2e2" stroke="#444" strokeWidth=".9" />
        <path d="M1 14l3 1.500L6 13l2 1 1 3 7 5" stroke="#3f465c" strokeWidth="3.200" />
        <path d="M7 9l4-1 2 4-2 5 5 5" stroke="#6d758c" strokeWidth="2.400" />
        <circle cx="5" cy="21" r="2.800" fill="#f59a1c" />
      </g>
    ),
  },
];

function ResourceBar() {
  return (
    <nav className="flex w-8 shrink-0 flex-col border-r border-[#aaa] bg-[#dcdcdc]">
      <button aria-label="资源条选项" className="flex h-[26px] items-center justify-center">
        <Ic s={14}>
          <circle cx="8" cy="8" r="5" stroke="#222" strokeWidth="1.400" />
          <circle cx="8" cy="8" r="1" fill="#222" />
          <path d="M8 0v3M8 13v3M0 8h3M13 8h3M2.500 2.500l2 2M11.500 11.500l2 2M13.500 2.500l-2 2M4.500 11.500l-2 2" stroke="#222" strokeWidth="1.500" />
        </Ic>
      </button>
      {rail.map((r) => (
        <button key={r.name} aria-label={r.name} className={`flex shrink-0 items-center justify-end pr-[2px] ${r.cls}`}>
          <Ic s={24} box={24}>
            {r.icon}
          </Ic>
        </button>
      ))}
    </nav>
  );
}

/* ---------- part navigator ---------- */

function Expander({ open = false }: { open?: boolean }) {
  return (
    <Ic s={16}>
      <path d="M3.500 4.500h7v7h-7z" fill="#fff" stroke="#ccc" />
      <path d="M4.500 8h5" stroke="#111" />
      {!open && <path d="M7 5.500v5" stroke="#111" />}
      <path d="M12 8h4" stroke="#999" strokeDasharray="1 1" />
    </Ic>
  );
}

const treeRows: ReactNode[] = [
  <>
    <Expander />
    <Ic>
      <path d="M2 4l6-3 6 3v8l-6 3-6-3zM2 4l6 3 6-3M8 1v14M2 12l6-4 6 4" stroke="#12884a" strokeWidth="1.100" />
      <path d="M10 15l5-4" stroke="#e33" strokeWidth="2" />
    </Ic>
    <span className="pl-[3px]">模型视图</span>
  </>,
  <>
    <Expander />
    <span className="px-[2px]"><CheckMark /></span>
    <Ic>
      <path d="M1 5l8-4 5 2v9l-6 2-7-2z" fill="#fff" stroke="#d22" strokeWidth="1.200" />
      <path d="M1 5l7 2 6-4M8 7v7" stroke="#d22" /><circle cx="9" cy="8" r="3" fill="#b8c8f0" stroke="#1a1a5c" /><path d="M12 8h3v6h-3z" fill="#222" />
    </Ic>
    <span className="pl-[3px]">摄像机</span>
  </>,
  <>
    <Expander />
    <Folder marked />
    <span className="pl-[3px]">用户表达式</span>
  </>,
  <>
    <Expander open />
    <Folder />
    <span className="pl-[3px]">模型历史记录</span>
  </>,
  <>
    <span className="ml-[25px] h-[10px] w-[9px] self-start border-b border-l border-dotted border-[#999]" />
    <span className="mr-[3px] ml-[3px] flex size-3 items-center justify-center border border-black">
      <CheckMark s={10} />
    </span>
    <Extrude />
    <span className="pl-[3px] text-[#8c8c8c]">拉伸 (5)</span>
  </>,
];

function PartNavigator() {
  return (
    <aside className="flex w-[193px] shrink-0 flex-col pr-[9px] pl-[6px] text-xs">
      <div className="flex h-7 items-center justify-between pt-[2px] pr-[7px] pl-1">
        <h2 className="leading-5">部件导航器</h2>
        <button aria-label="最大化面板" className="h-[11px] w-3 border border-black" />
      </div>
      <div className="flex flex-1 flex-col border border-[#d6d6d6] p-px">
        <div className="flex h-[21px] shrink-0 items-center gap-[18px] border-b border-[#ccc] bg-[#efefef] pl-[6px]">
          名称
          <Ic s={9} box={9}>
            <path d="M0 7h9L4.500 2z" fill="#111" />
          </Ic>
        </div>
        <ul>
          {Array.from({ length: 33 }, (_, i) => (
            <li key={i} className="flex h-5 items-center border-b border-[#e4e4e4] pl-[3px] leading-4 even:bg-[#fafafa]">
              {treeRows[i]}
            </li>
          ))}
        </ul>
        <div className="mt-auto flex h-4 items-center bg-[#efefef] pl-[17px]">
          <span className="h-[2px] w-[53px] rounded bg-[#888]" />
        </div>
      </div>
      <div className="h-[5px] border border-[#aaa] bg-[#dcdcdc]" />
      {["相关性", "细节", "预览"].map((t) => (
        <button key={t} className="flex h-6 items-center justify-between border-b-2 border-[#d0d0d0] pr-[5px] pl-[7px] text-[14px] leading-5 text-[#006487]">
          {t}
          <Chevron />
        </button>
      ))}
      <div className="h-[7px]" />
    </aside>
  );
}

/* ---------- graphics window ---------- */

function Model() {
  return (
    <svg viewBox="230 233 1494 791" preserveAspectRatio="xMinYMin slice" className="h-full w-full" aria-hidden="true">
      <path d="M579 233H1027.500L961 830 794 888.500 449 693.500z" fill="#3f7fb7" />
      <path d="M914.500 233H1027.500L993.500 540 970.500 747 961 830 794 888.500 810 803 858.500 540z" fill="#4388c4" />
      <path d="M449 693.500L616.500 635.500 961 830 794 888.500z" fill="#4489c1" />
      <path d="M810 803L820 750 961 830 794 888.500z" fill="#4a91cd" />
      <path d="M699.500 233L637 540 616.500 635.500 449 693.500M616.500 635.500L961 830" fill="none" stroke="#3b75a9" />
      <path d="M579 233L472 613" stroke="#9a9a9a" />
      <path d="M472 613L449 693.500 794 888.500 961 830 1027.500 233" fill="none" stroke="#1d2b3a" />
      <path d="M794 888.500L810 803" stroke="#1d2b3a" />
      <path d="M914.500 233L858.500 540 810 803" fill="none" stroke="#8d9bb0" />
      <path d="M914.500 233L897 325" stroke="#2a3a4c" strokeDasharray="2 2" />
      <path d="M472 612.500L633 556 970.500 746.500 810 803z" fill="none" stroke="#f79b45" strokeWidth="3" strokeLinejoin="round" />
      <path d="M642 706L709.500 356 722 352 642 706" fill="none" stroke="#a9986a" strokeWidth="1.200" />
      <path d="M809 233L705 762" stroke="#7d713f" strokeWidth="2" />
      <path d="M719 347l16 1-11 8z" fill="#b49a48" />
      <ellipse cx="723" cy="352" rx="3.500" ry="4.500" fill="#84713a" />
      <circle cx="705" cy="762" r="4.500" fill="#a08a3c" />
      <circle cx="704" cy="760.500" r="1.500" fill="#d2c07a" />
      <path d="M758 774l52 29-50-25z" fill="#a8975a" stroke="#8d7c40" />
      <path d="M748 768l14 3.500-3 7z" fill="#94803e" />

      {/* view triad */}
      <g strokeLinejoin="round">
        <path d="M263 931l17-6 18 11-2 22-17 6-20-11z" fill="#d2d3d4" stroke="#aaa" />
        <path d="M263 931l18 9 17-5M281 940l-3 24M280 925l-6 22 22 10M274 947l-15 6" fill="none" stroke="#aaa" />
        <path d="M294 957L268 943" stroke="#dba6a6" strokeWidth="3" />
        <path d="M262 940l11 1-3 6z" fill="#dba6a6" />
        <path d="M294 957L300 928" stroke="#0a2cc0" strokeWidth="3" />
        <path d="M301 920l3 12-7-1z" fill="#0a2cc0" />
        <path d="M294 957L274 964" stroke="#2a9a30" strokeWidth="3" />
        <path d="M265 967l9-6 2 6z" fill="#2a9a30" />
        <circle cx="294" cy="957.500" r="4" fill="#c9c9c9" />
      </g>
      <g fontSize="12" fontFamily="Open Sans, sans-serif">
        <text x="299" y="919" fill="#2a4ae0">Z</text>
        <text x="255" y="942" fill="#d03a3a">X</text>
        <text x="258" y="973" fill="#3a9a3a">Y</text>
      </g>
    </svg>
  );
}

function GraphicsWindow() {
  return (
    <main className="flex min-w-0 flex-1 flex-col">
      <div className="flex h-[23px] border-b-2 border-[#549fb8]">
        <button className="flex w-[92px] items-center gap-[6px] bg-[#549fb8] pl-[6px] text-xs leading-5 text-white">
          <Ic>
            <path d="M2 4l4-3 3 2v6l5-1v3l-6 4-6-3z" fill="#2a5fd0" stroke="#12368c" />
            <path d="M2 4l3 2v6M5 12l3 2" stroke="#9ac0ff" />
          </Ic>
          1.prt
          <Ic s={11} box={12}>
            <path d="M9.500 6v5h-8V1h6l2 2" stroke="#fff" strokeWidth="1.500" />
            <path d="M5 8l6-5" stroke="#fff" strokeWidth="1.800" />
          </Ic>
          <Ic s={9} box={9}>
            <path d="M1 1l7 7M8 1L1 8" stroke="#bcc9ce" strokeWidth="1.800" />
          </Ic>
        </button>
      </div>
      <div className="relative min-h-0 flex-1 border-l border-[#888] bg-linear-to-b from-[#b4b5b7] to-[#e7e8e9] to-75%">
        <div className="absolute inset-0">
          <Model />
        </div>
        <p className="absolute right-[11px] bottom-0 text-[15px] leading-5 text-white [text-shadow:1px_1px_0_#777]">CSDN @划水猫</p>
      </div>
    </main>
  );
}

/* ---------- extrude dialog ---------- */

function Section({ title, open = true, pad = "", children }: { title: string; open?: boolean; pad?: string; children?: ReactNode }) {
  return (
    <section className={`border-b border-[#c0c0c0] bg-white px-[9px] ${pad}`}>
      <div className={`-mr-1 -ml-[2px] flex items-center justify-between text-[14px] leading-[26px] text-[#006487] ${open ? "mb-1 h-[26px]" : "h-[23px]"}`}>
        <h3>{title}</h3>
        <button aria-label={title}>
          <Chevron up={open} />
        </button>
      </div>
      {children}
    </section>
  );
}

function ToolButton({ label, children }: Children & { label: string }) {
  return (
    <button aria-label={label} className="flex size-6 shrink-0 items-center justify-center border border-[#aaa] bg-white">
      {children}
    </button>
  );
}

function Combo({ id, label, value, icon }: { id: string; label: string; value: string; icon?: ReactNode }) {
  return (
    <div className="flex h-[26px] items-center justify-between">
      <label htmlFor={id}>{label}</label>
      <div className="relative flex h-[26px] w-[141px] items-center border border-[#aaa] bg-white pl-1">
        {icon}
        <select id={id} className="h-full min-w-0 flex-1 appearance-none bg-transparent pl-1 leading-4 first:pl-0">
          <option>{value}</option>
        </select>
        <span className="pointer-events-none absolute right-[5px]">
          <Caret />
        </span>
      </div>
    </div>
  );
}

function Distance({ id, value }: { id: string; value: string }) {
  return (
    <div className="flex h-[25px] items-center justify-between">
      <label htmlFor={id}>距离</label>
      <div className="flex h-[25px] w-[141px] items-center border border-[#aaa] bg-white pr-1 pl-1">
        <input id={id} defaultValue={value} className="w-[78px] bg-transparent leading-4 outline-none" />
        <span className="flex-1">mm</span>
        <Caret />
      </div>
    </div>
  );
}

const draftOptions = ["无", "从起始限制", "从截面", "从截面 - 不对称角", "从截面 - 对称角", "从截面匹配的终止处"];

function ExtrudeDialog() {
  return (
    <div role="dialog" aria-label="拉伸" className="absolute top-[120px] right-[158px] w-[328px] border border-[#dcdcdc] bg-[#f0f0f0] text-xs leading-4">
      <div className="-mx-px -mt-px flex h-6 items-center bg-[#549fb8] px-[7px] text-[14px] leading-6 text-white">
        <Ic s={14}>
          <circle cx="8" cy="8" r="5" stroke="#fff" strokeWidth="2.200" />
          <circle cx="8" cy="8" r="1.300" fill="#fff" />
          <path d="M8 0v3M8 13v3M0 8h3M13 8h3M2.500 2.500l2 2M11.500 11.500l2 2M13.500 2.500l-2 2M4.500 11.500l-2 2" stroke="#fff" strokeWidth="2.400" />
        </Ic>
        <h2 className="flex-1 pl-2">拉伸</h2>
        <button aria-label="重置" className="pr-2">
          <Ic s={13}>
            <path d="M9 2c5 1 7 6 4 10-3 3-8 3-10 0-1-2-1-4 0-6" stroke="#fff" strokeWidth="2" />
            <path d="M0 8l3-5 4 4z" fill="#fff" />
          </Ic>
        </button>
        <button aria-label="关闭对话框" className="pr-[2px]">
          <Ic s={12} box={12}>
            <path d="M1 1l10 10M11 1L1 11" stroke="#fff" strokeWidth="2.200" />
          </Ic>
        </button>
      </div>

      <div className="flex flex-col gap-[3px] px-[5px] pt-1">
        <Section title="表区域驱动" pad="pb-2">
          <div className="flex items-center gap-[2px]">
            <button className="mr-[2px] flex h-8 flex-1 items-center gap-[6px] bg-[#ffe178] pl-[2px]">
              <CheckMark />
              选择曲线 (4)
            </button>
            <ToolButton label="反向">
              <FlipIcon />
            </ToolButton>
            <ToolButton label="曲线规则">
              <Ic>
                <path d="M1.500 2l9 1.500V14l-9-2z" fill="#e4ebe4" stroke="#444" strokeWidth=".9" />
                <path d="M10.500 6l3-1v8l-3 1z" fill="#b8c4b8" stroke="#444" strokeWidth=".9" />
                <path d="M3.500 5l2 .3v2.500l-2-.3zM3.500 9l2 .3V12M7.500 6v6" stroke="#222" />
                <path d="M12 0l1 3 3 .5-2.500 2 .5 3-2.500-1.500L9 8.500 9.500 5 8 3l3-.2z" fill="#ffe93c" stroke="#b89a00" strokeWidth=".5" />
              </Ic>
            </ToolButton>
            <button aria-label="绘制截面" className="flex size-8 items-center justify-center bg-[#ffe178]">
              <Ic s={26} box={26}>
                <path d="M2.500 4v16" stroke="#1818b8" strokeWidth="1.600" />
                <path d="M1 3.500l23 8M3 1v5" stroke="#1818b8" strokeWidth="1.400" />
                <path d="M12.500 4v21" stroke="#0a9090" strokeWidth="1.400" strokeDasharray="3 1.500" />
                <circle cx="19" cy="17.500" r="4.500" stroke="#1818b8" strokeWidth="1.600" />
                <path d="M2 6.500c12-1 21 3 22 18" stroke="#e02818" strokeWidth="2" />
                <path d="M19 9l5 4M24 8v5" stroke="#1818b8" />
              </Ic>
            </button>
          </div>
          <div className="mt-[2px] flex h-8 items-center justify-between">
            指定原始曲线
            <button aria-label="指定原始曲线" className="flex size-8 items-center justify-center border border-[#aaa] bg-white">
              <Ic s={26} box={26}>
                <path d="M2 23c14-3 16-11 4-19" stroke="#111" strokeWidth="1.200" />
                <path d="M6 4l14 5" stroke="#d01818" strokeWidth="1.600" />
                <path d="M25 11l-7 .5 2-5z" fill="#d01818" /><circle cx="6" cy="4" r="2.200" fill="#e01818" />
              </Ic>
            </button>
          </div>
        </Section>

        <Section title="方向" pad="pb-2">
          <div className="flex h-8 items-center gap-[2px]">
            <span className="flex flex-1 items-center gap-[6px] pl-[2px]">
              <CheckMark />
              指定矢量
            </span>
            <ToolButton label="反转方向">
              <FlipIcon />
            </ToolButton>
            <ToolButton label="矢量对话框">
              <Ic>
                <path d="M9 12V4" stroke="#d01818" strokeWidth="1.500" /><path d="M9 0l2 5H7z" fill="#d01818" />
                <path d="M1 7c0 4 2 5 5 5" stroke="#e88a1a" strokeWidth="2" /><path d="M4 9l4 3-4 3z" fill="#e88a1a" />
                <path d="M9 14.500h2M12 14.500h2M15 14.500h1" stroke="#111" strokeWidth="2" />
              </Ic>
            </ToolButton>
            <div className="flex h-8 w-[49px] border border-[#aaa]">
              <button aria-label="矢量方法" className="flex flex-1 items-center justify-center">
                <Ic s={26} box={26}>
                  <path d="M9 23l4-5h11l-5 6z" fill="#eee" stroke="#222" strokeWidth=".9" />
                  <path d="M12 11c2-2 4-2 6-1v12c-2 1-4 1-6 0z" fill="#cdd8cd" stroke="#222" strokeWidth=".9" />
                  <path d="M18.500 20V6" stroke="#d01818" strokeWidth="1.600" /><path d="M18.500 1l2.500 6h-5z" fill="#d01818" />
                  <path d="M13 16l-8 3" stroke="#d01818" strokeWidth="1.600" /><path d="M0 20l6-4 1 5z" fill="#d01818" />
                </Ic>
              </button>
              <button aria-label="矢量列表" className="flex w-[17px] items-center justify-center border-l border-[#aaa]">
                <Caret />
              </button>
            </div>
          </div>
        </Section>

        <Section title="限制" pad="pb-3">
          <div className="flex flex-col gap-[2px]">
            <Combo id="start" label="开始" value="值" icon={<ValueCube />} />
            <Distance id="start-distance" value="-2" />
            <Combo id="end" label="结束" value="值" icon={<ValueCube />} />
            <Distance id="end-distance" value="15" />
          </div>
          <label className="mt-[6px] flex h-[13px] items-center gap-[5px]">
            <input type="checkbox" className="size-[13px] appearance-none border border-[#aaa] bg-[#f0f0f0]" />
            开放轮廓智能体
          </label>
        </Section>

        <Section title="布尔" pad="pb-2">
          <Combo
            id="boolean"
            label="布尔"
            value="无"
            icon={
              <Ic>
                <circle cx="10.500" cy="10" r="4.800" fill="#1f9a86" stroke="#111" />
                <path d="M5 0v9M.5 4.500h9M2 1.500l6 6M8 1.500l-6 6" stroke="#2a6a5a" />
                <path d="M5 1l1.200 2.300L9 4.500 6.200 5.700 5 8 3.800 5.700 1 4.500l2.800-1.200z" fill="#fff02a" />
              </Ic>
            }
          />
        </Section>

        <Section title="拔模" pad="pb-[7px]">
          <div className="relative flex flex-col gap-px">
            <Combo id="draft" label="拔模" value="从截面" />
            <span className="h-[26px] leading-[26px]">角度选项</span>
            <span className="h-[26px] leading-[26px]">角度</span>
            <div className="absolute top-[25px] right-0 w-[141px] border border-[#aaa] bg-white pb-1">
              <ul role="listbox" aria-label="拔模选项" className="border-b border-[#aaa]">
                {draftOptions.map((o) => (
                  <li key={o} role="option" aria-selected={o === "无"} className="h-[19px] pl-[2px] leading-[19px] aria-selected:bg-[#aed6e0]">
                    {o}
                  </li>
                ))}
              </ul>
            </div>
          </div>
        </Section>

        <Section title="偏置" pad="pb-[7px]">
          <div className="h-[26px] leading-[26px]">偏置</div>
        </Section>
        <Section title="设置" open={false} />
        <Section title="预览" open={false} />
      </div>

      <div className="flex justify-end gap-[5px] px-[15px] pt-[11px] pb-[9px]">
        <button className="h-[25px] w-[54px] bg-[#74b3c9] whitespace-nowrap text-white">&lt; 确定 &gt;</button>
        <button className="h-[25px] w-[54px] border border-[#aaa] bg-[#dcdcdc]">取消</button>
      </div>
    </div>
  );
}

/* ---------- red notes over the window ---------- */

const arrows = [
  [1074, 773, 943, 749],
  [1063, 904, 950, 840],
  [1171, 783, 1405, 680],
  [1171, 928, 1465, 660],
];

function Notes() {
  return (
    <svg viewBox="0 0 1728 1032" preserveAspectRatio="xMinYMin slice" className="pointer-events-none absolute inset-0 h-full w-full">
      {arrows.map(([x1, y1, x2, y2]) => {
        const len = Math.hypot(x2 - x1, y2 - y1);
        const angle = (Math.atan2(y2 - y1, x2 - x1) * 180) / Math.PI;
        return (
          <g key={`${x1}-${y1}`} transform={`translate(${x1} ${y1}) rotate(${angle})`}>
            <path d={`M0 0H${len - 14}`} stroke="#ed1c24" strokeWidth="5" strokeLinecap="round" />
            <path d={`M${len} 0l-20-8 4 8-4 8z`} fill="#ed1c24" />
          </g>
        );
      })}
      <g fill="#ed1c24" fontSize="21" fontFamily="Noto Sans CJK SC, sans-serif">
        <text x="1090" y="790">截面</text>
        <text x="1079" y="926">起始处</text>
      </g>
    </svg>
  );
}

export default function App() {
  return (
    <div className="relative flex min-h-screen flex-col overflow-hidden bg-white font-['Open_Sans','Noto_Sans_CJK_SC',sans-serif] text-[#1a1a1a]">
      <div className="flex flex-1 flex-col border-x border-t border-[#a8a8a8] px-[3px]">
        <TitleBar />
        <TabBar />
        <Ribbon />
        <Toolbar />
        <div className="flex h-[21px] items-center justify-end gap-1 pr-[39px]">
          <span className="flex bg-[#dcdcdc]">
            <Ic>
              <path d="M3 3l3 11M3 3c3-2 5 1 8-1l3 7c-3 2-5-1-8 1" stroke="#999" />
              <path d="M4 4h3v3H4zM9 5h3v3H9z" fill="#bbb" />
            </Ic>
          </span>
          <FullScreenIcon />
        </div>
        <div className="flex flex-1">
          <ResourceBar />
          <PartNavigator />
          <GraphicsWindow />
        </div>
      </div>
      <footer className="h-2 border-y border-[#a8a8a8] bg-[#549fb8]" />
      <span className="absolute top-0 right-[304px] flex h-5 w-[50px] items-center justify-center rounded-b-md bg-black text-[11px] leading-4 text-white">11月</span>
      <ExtrudeDialog />
      <Notes />
    </div>
  );
}
